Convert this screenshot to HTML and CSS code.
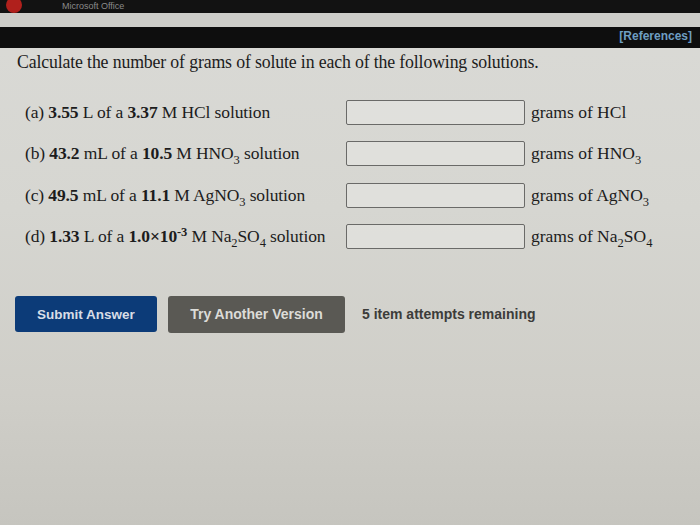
FILE: index.html
```html
<!DOCTYPE html>
<html>
<head>
<meta charset="utf-8">
<link rel="stylesheet" href="styles.css">
</head>
<body>
<div class="topbar">
  <span class="logo"></span>
  <span class="apptitle">Microsoft Office</span>
</div>
<div class="strip"></div>
<div class="refbar"><span class="refs">[References]</span></div>
<main class="content">
  <p class="prompt">Calculate the number of grams of solute in each of the following solutions.</p>
  <div class="rows">
    <div class="row">
      <span class="q">(a) <b>3.55</b> L of a <b>3.37</b> M HCl solution</span>
      <span class="box"></span>
      <span class="unit">grams of HCl</span>
    </div>
    <div class="row">
      <span class="q">(b) <b>43.2</b> mL of a <b>10.5</b> M HNO<sub>3</sub> solution</span>
      <span class="box"></span>
      <span class="unit">grams of HNO<sub>3</sub></span>
    </div>
    <div class="row">
      <span class="q">(c) <b>49.5</b> mL of a <b>11.1</b> M AgNO<sub>3</sub> solution</span>
      <span class="box"></span>
      <span class="unit">grams of AgNO<sub>3</sub></span>
    </div>
    <div class="row">
      <span class="q">(d) <b>1.33</b> L of a <b>1.0×10<sup>-3</sup></b> M Na<sub>2</sub>SO<sub>4</sub> solution</span>
      <span class="box"></span>
      <span class="unit">grams of Na<sub>2</sub>SO<sub>4</sub></span>
    </div>
  </div>
  <div class="actions">
    <button class="btn submit">Submit Answer</button>
    <button class="btn another">Try Another Version</button>
    <span class="attempts">5 item attempts remaining</span>
  </div>
</main>
</body>
</html>
```
FILE: styles.css
```css
html, body {
  margin: 0;
  padding: 0;
}
body {
  width: 700px;
  height: 525px;
  overflow: hidden;
  background: linear-gradient(180deg, #dadad6 0%, #d6d6d1 40%, #cfcec8 75%, #c6c5bf 100%);
  font-family: "Liberation Serif", "Times New Roman", serif;
  color: #1c1c1c;
}
.topbar {
  height: 13px;
  background: #121212;
  overflow: hidden;
  display: flex;
  align-items: center;
  gap: 40px;
}
.logo {
  width: 16px;
  height: 16px;
  border-radius: 50%;
  background: #b0201c;
  margin-left: 6px;
  margin-top: -4px;
  flex: none;
}
.apptitle {
  font-family: "Liberation Sans", Arial, sans-serif;
  font-size: 9px;
  color: #8a8a8a;
  line-height: 11px;
}
.strip {
  height: 14px;
  background: #cdcdc9;
}
.refbar {
  height: 21px;
  background: #0e0e0e;
  display: flex;
  justify-content: flex-end;
  align-items: center;
  padding-right: 8px;
}
.refs {
  font-family: "Liberation Sans", Arial, sans-serif;
  font-weight: bold;
  font-size: 12px;
  color: #6e9ec2;
  margin-top: -3px;
}
.content {
  padding: 3px 0 0 17px;
}
.prompt {
  margin: 0;
  font-size: 17.8px;
  line-height: 22px;
  letter-spacing: -0.15px;
}
.rows {
  margin-top: 27px;
  display: flex;
  flex-direction: column;
  gap: 16.3px;
  padding-left: 8px;
}
.row {
  display: flex;
  align-items: center;
  height: 25px;
  font-size: 17.5px;
}
.row b {
  font-weight: bold;
}
.q {
  width: 321px;
  white-space: nowrap;
  letter-spacing: -0.12px;
}
.box {
  width: 177px;
  height: 23px;
  border: 1px solid #6a6a68;
  border-radius: 2px;
  background: rgba(230, 230, 226, 0.6);
  flex: none;
}
.unit {
  margin-left: 6px;
  white-space: nowrap;
}
sub, sup {
  font-size: 12.5px;
  line-height: 0;
}
sub {
  vertical-align: -5px;
}
sup {
  vertical-align: 6px;
}
.actions {
  margin-top: 47px;
  display: flex;
  align-items: center;
  margin-left: -2px;
}
.btn {
  font-family: "Liberation Sans", Arial, sans-serif;
  font-weight: bold;
  font-size: 13.5px;
  border: none;
  border-radius: 3px;
  color: #d8dde6;
  height: 36px;
  padding: 0;
}
.submit {
  width: 142px;
  background: #0c3b78;
}
.another {
  width: 177px;
  margin-left: 11px;
  height: 37px;
  background: #5a5954;
  color: #dcdcd8;
  font-size: 14px;
}
.attempts {
  margin-left: 17px;
  font-family: "Liberation Sans", Arial, sans-serif;
  font-weight: bold;
  font-size: 14px;
  color: #3c3c3a;
}
```
